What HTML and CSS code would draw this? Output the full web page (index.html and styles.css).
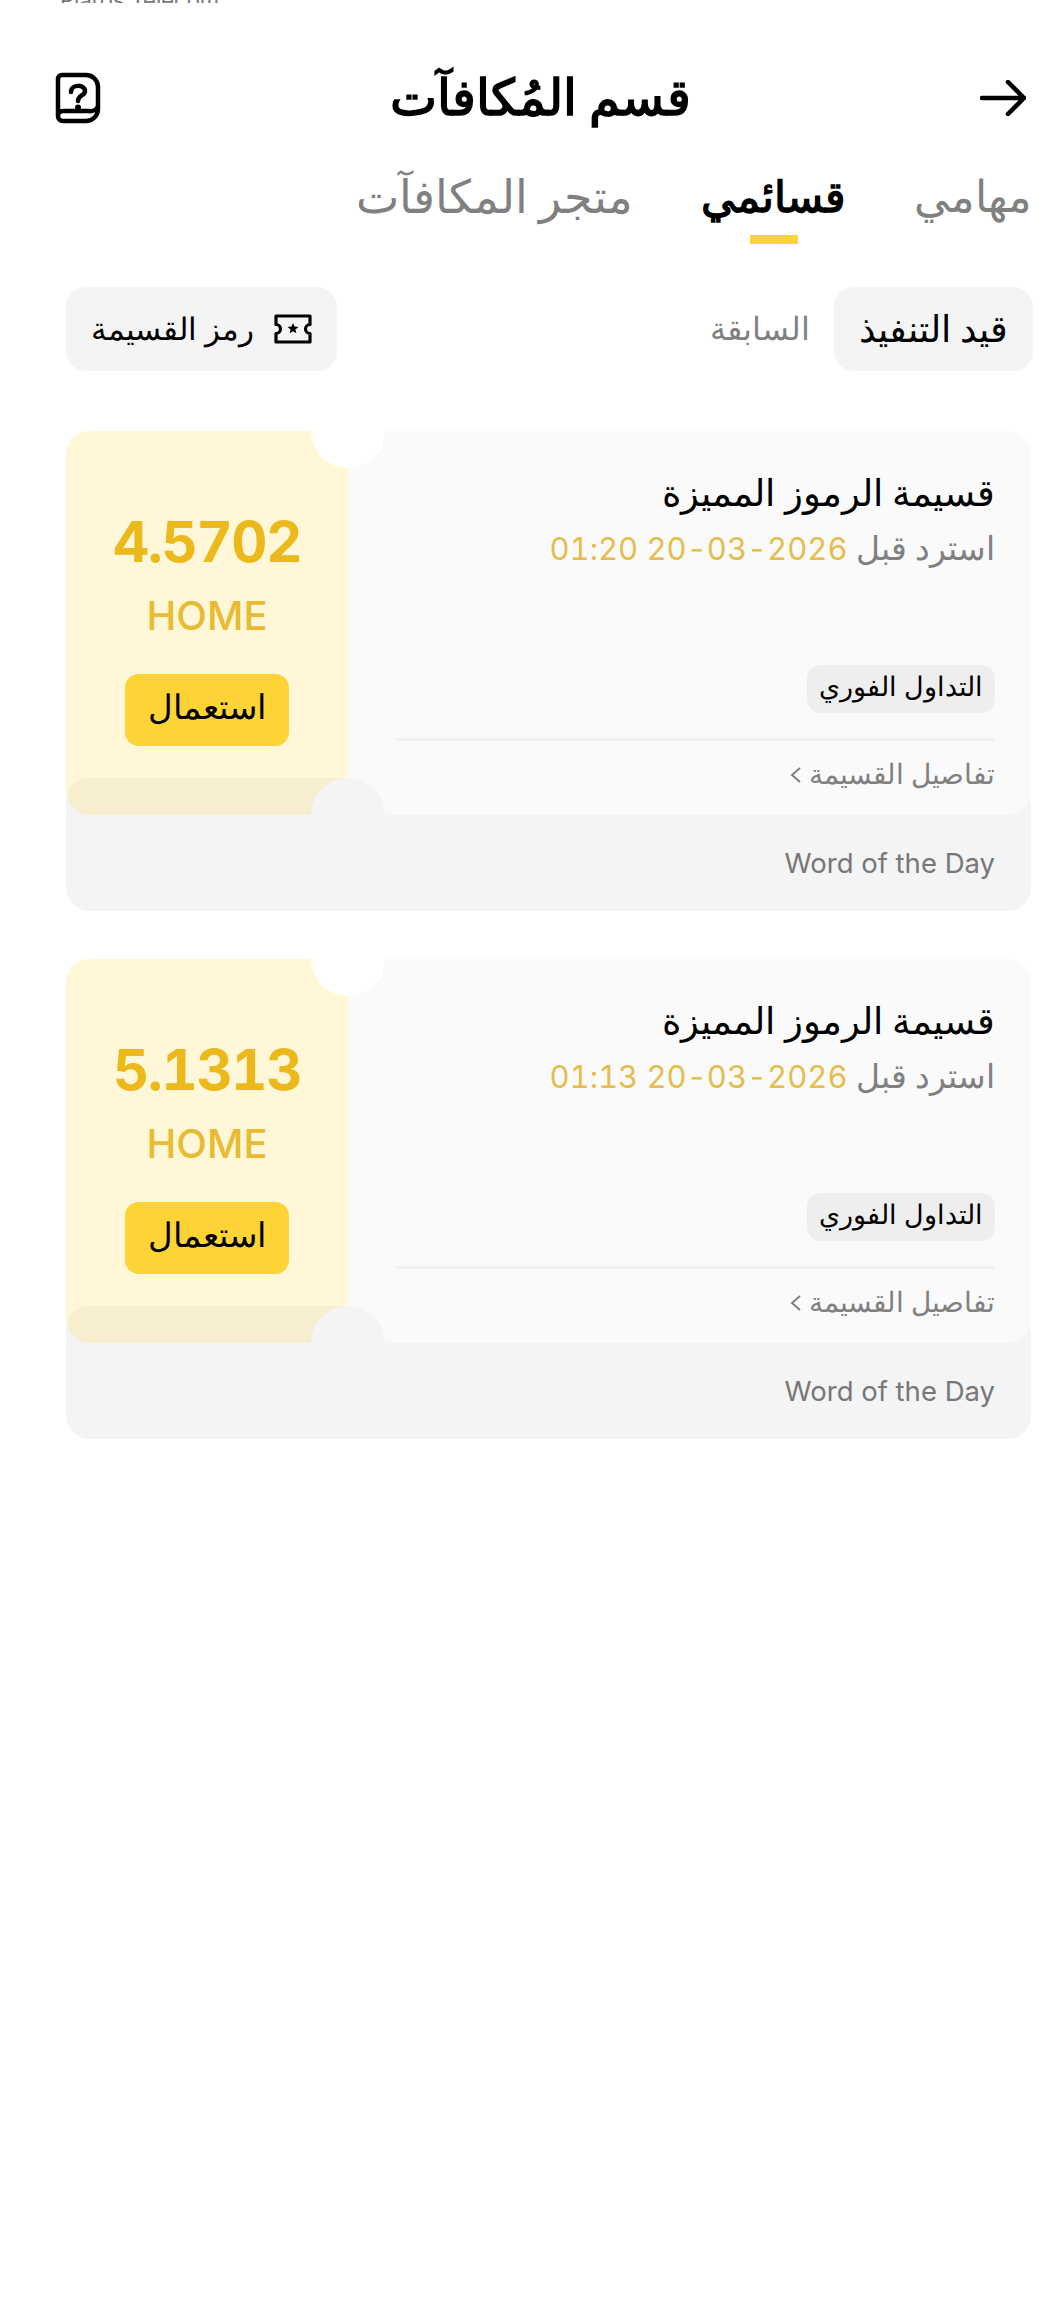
FILE: index.html
```html
<!DOCTYPE html>
<html lang="ar" dir="rtl">
  <head>
    <meta charset="UTF-8" />
    <meta name="viewport" content="width=device-width, initial-scale=1.0" />
    <title>قسم المكافآت</title>
    <link rel="stylesheet" href="styles.css">
  </head>
  <body>
    <!-- status text cut off by the top edge -->
    <div class="carrier" dir="ltr">Plaros Telecom</div>

    <!-- header -->
    <header class="top" dir="ltr">
      <svg class="top-icon" width="46" height="52" viewBox="0 0 46 52" fill="none" stroke="#000" stroke-width="4.500" stroke-linejoin="round" stroke-linecap="round">
        <path d="M3 44V7a4 4 0 0 1 4-4h24a12 12 0 0 1 12 12v22a12 12 0 0 1-12 12H8a5 5 0 0 1-5-5a5 5 0 0 1 5-5h26a8 8 0 0 0 9-5"/>
        <path d="M16 20c0-8 14-8 14-1c0 5-7 4-7 10" stroke-width="4.500"/>
        <circle cx="23" cy="35.500" r="3" fill="#000" stroke="none"/>
      </svg>
      <h1 class="top-title">قسم المُكافآت</h1>
      <svg class="top-arrow" width="46" height="36" viewBox="0 0 46 36" fill="none" stroke="#000" stroke-width="4.500" stroke-linecap="round" stroke-linejoin="round">
        <path d="M2 18H44M28 2l16 16l-16 16"/>
      </svg>
    </header>

    <!-- tabs -->
    <nav class="tabs">
      <a class="tab" href="#">مهامي</a>
      <a class="tab on" href="#">قسائمي</a>
      <a class="tab shop" href="#">متجر المكافآت</a>
    </nav>

    <!-- filter row -->
    <div class="filters">
      <a class="chip now" href="#">قيد التنفيذ</a>
      <a class="plain" href="#">السابقة</a>
      <a class="chip code" href="#">
        <svg width="38" height="30" viewBox="0 0 38 30" fill="none" stroke="#000" stroke-width="3.200" stroke-linejoin="round">
          <path d="M2 2H36V10.500a4.500 4.500 0 0 0 0 9V28H2V19.500a4.500 4.500 0 0 0 0-9Z"/>
          <path d="M19 9l1.500 3.600l3.900.3l-3 2.500l.9 3.800l-3.300-2l-3.300 2l.9-3.800l-3-2.500l3.900-.3Z" fill="#000" stroke="none"/>
        </svg>
        رمز القسيمة
      </a>
    </div>

    <!-- coupon list -->
    <main class="list">
      <article class="card">
        <div class="ticket">
          <div class="body">
            <h2 class="name">قسيمة الرموز المميزة</h2>
            <p class="date">استرد قبل <span class="num" dir="ltr">01:20 20-03-2026</span></p>
            <span class="tag">التداول الفوري</span>
            <hr class="line">
            <a class="more" href="#">تفاصيل القسيمة
              <svg width="11" height="18" viewBox="0 0 11 18" fill="none" stroke="#808080" stroke-width="2"><path d="M10 2L2 9l8 7"/></svg>
            </a>
          </div>
          <div class="stub">
            <b class="amount">4.5702</b>
            <span class="unit">HOME</span>
            <a class="use" href="#">استعمال</a>
          </div>
          <i class="notch up"></i>
          <i class="notch down"></i>
        </div>
        <div class="foot">Word of the Day</div>
      </article>

      <article class="card">
        <div class="ticket">
          <div class="body">
            <h2 class="name">قسيمة الرموز المميزة</h2>
            <p class="date">استرد قبل <span class="num" dir="ltr">01:13 20-03-2026</span></p>
            <span class="tag">التداول الفوري</span>
            <hr class="line">
            <a class="more" href="#">تفاصيل القسيمة
              <svg width="11" height="18" viewBox="0 0 11 18" fill="none" stroke="#808080" stroke-width="2"><path d="M10 2L2 9l8 7"/></svg>
            </a>
          </div>
          <div class="stub">
            <b class="amount">5.1313</b>
            <span class="unit">HOME</span>
            <a class="use" href="#">استعمال</a>
          </div>
          <i class="notch up"></i>
          <i class="notch down"></i>
        </div>
        <div class="foot">Word of the Day</div>
      </article>
    </main>
  </body>
</html>
```

FILE: styles.css
```css
html,
body {
  margin: 0;
  padding: 0;
}
body {
  height: 2309px;
  overflow: hidden;
  background-color: #fff;
  color: #000;
  font-family: "Liberation Serif", serif;
}
a {
  color: inherit;
  text-decoration: none;
}

/* text cut by the top edge */
.carrier {
  height: 3px;
  padding-left: 60px;
  overflow: hidden;
  font-family: Inter, sans-serif;
  font-size: 22px;
  line-height: 0;
  color: #777;
}

/* header */
.top {
  display: flex;
  align-items: center;
  justify-content: space-between;
  height: 62px;
  margin-top: 64px;
  padding: 0 18px 0 55px;
}
.top-title {
  margin: 0;
  font-size: 50px;
  font-weight: 700;
  line-height: 62px;
}

/* tabs */
.tabs {
  display: flex;
  gap: 68px;
  margin-top: 38px;
  padding-right: 12px;
}
.tab {
  position: relative;
  font-size: 44px;
  line-height: 62px;
  color: #808080;
}
.tab.on {
  font-size: 43px;
  font-weight: 700;
  color: #000;
}
.tab.shop {
  font-size: 46px;
}
.tab.on::after {
  content: "";
  position: absolute;
  left: 50%;
  bottom: -15px;
  width: 48px;
  height: 9px;
  margin-left: -24px;
  background-color: #fbd536;
}

/* filter row */
.filters {
  display: flex;
  align-items: center;
  gap: 24px;
  margin-top: 58px;
  padding: 0 11px 0 66px;
}
.chip {
  display: flex;
  align-items: center;
  gap: 20px;
  height: 84px;
  padding: 0 25px;
  background-color: #f4f4f4;
  border-radius: 20px;
  font-size: 31px;
}
.chip.now {
  font-size: 37px;
}
.plain {
  font-size: 32px;
  color: #808080;
}
.code {
  margin-right: auto;
}

/* coupon list */
.list {
  display: flex;
  flex-direction: column;
  gap: 48px;
  margin: 60px 13px 0 66px;
}
.card {
  position: relative;
}
.ticket {
  position: relative;
  z-index: 1;
  display: flex;
  height: 384px;
}
.body {
  flex: 1;
  display: flex;
  flex-direction: column;
  align-items: flex-start;
  padding: 32px 36px 0 48px;
  background-color: #fafafa;
  border-radius: 0 24px 24px 0;
}
.name {
  margin: 0;
  font-size: 37.400px;
  font-weight: 400;
  line-height: 62px;
}
.date {
  margin: 0;
  font-size: 33px;
  line-height: 48px;
  color: #808080;
}
.num {
  font-family: Inter, sans-serif;
  font-size: 31px;
  font-variant-numeric: tabular-nums;
  letter-spacing: -1.100px;
  color: #e5bd4c;
}
.tag {
  margin-top: 92px;
  padding: 0 12px;
  height: 48px;
  line-height: 44px;
  background-color: #eee;
  border-radius: 14px;
  font-size: 27px;
}
.line {
  align-self: stretch;
  width: 100%;
  height: 3px;
  margin: 25px 0 0;
  border: 0;
  background-color: #efefef;
}
.more {
  display: flex;
  align-items: center;
  gap: 8px;
  margin-top: 17px;
  font-size: 28px;
  color: #808080;
}
.stub {
  display: flex;
  flex-direction: column;
  align-items: center;
  width: 282px;
  padding-top: 76px;
  box-sizing: border-box;
  background-color: rgba(253, 215, 55, .2);
  border-radius: 24px 0 0 24px;
}
.amount {
  font-family: Inter, sans-serif;
  font-size: 56px;
  font-weight: 700;
  font-variant-numeric: tabular-nums;
  letter-spacing: -1.300px;
  line-height: 70px;
  color: #ebb91c;
}
.unit {
  margin-top: 14px;
  font-family: Inter, sans-serif;
  font-size: 40px;
  font-weight: 500;
  line-height: 50px;
  color: #e8bb32;
}
.use {
  width: 164px;
  height: 72px;
  margin-top: 33px;
  background-color: #fdd335;
  border-radius: 14px;
  font-size: 34px;
  line-height: 68px;
  text-align: center;
}
/* half circles on the edge */
.notch {
  position: absolute;
  right: 646px;
  width: 74px;
  height: 37px;
}
.notch.up {
  top: 0;
  background-color: #fff;
  border-radius: 0 0 37px 37px;
}
.notch.down {
  bottom: 0;
  background-color: #f4f4f4;
  border-radius: 37px 37px 0 0;
}

.foot {
  height: 133px;
  margin-top: -37px;
  padding: 37px 36px 0;
  box-sizing: border-box;
  background-color: #f4f4f4;
  border-radius: 24px;
  font-family: Inter, sans-serif;
  font-size: 27.500px;
  line-height: 96px;
  text-align: right;
  color: #777;
}
```
